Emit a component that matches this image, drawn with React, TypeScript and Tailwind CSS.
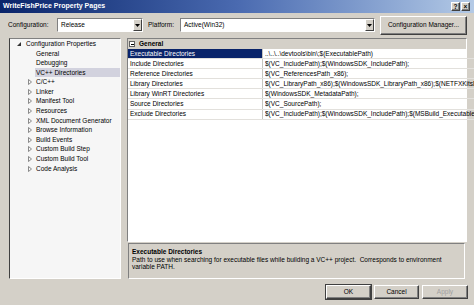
import type { ReactNode } from 'react'

const treeItems = [
  { label: 'General', kind: 'leaf' },
  { label: 'Debugging', kind: 'leaf' },
  { label: 'VC++ Directories', kind: 'leaf', selected: true },
  { label: 'C/C++', kind: 'branch' },
  { label: 'Linker', kind: 'branch' },
  { label: 'Manifest Tool', kind: 'branch' },
  { label: 'Resources', kind: 'branch' },
  { label: 'XML Document Generator', kind: 'branch' },
  { label: 'Browse Information', kind: 'branch' },
  { label: 'Build Events', kind: 'branch' },
  { label: 'Custom Build Step', kind: 'branch' },
  { label: 'Custom Build Tool', kind: 'branch' },
  { label: 'Code Analysis', kind: 'branch' },
]

const rows = [
  ['Executable Directories', '..\\..\\..\\devtools\\bin\\;$(ExecutablePath)'],
  ['Include Directories', '$(VC_IncludePath);$(WindowsSDK_IncludePath);'],
  ['Reference Directories', '$(VC_ReferencesPath_x86);'],
  ['Library Directories', '$(VC_LibraryPath_x86);$(WindowsSDK_LibraryPath_x86);$(NETFXKitsDir)Lib\\um\\x86'],
  ['Library WinRT Directories', '$(WindowsSDK_MetadataPath);'],
  ['Source Directories', '$(VC_SourcePath);'],
  ['Exclude Directories', '$(VC_IncludePath);$(WindowsSDK_IncludePath);$(MSBuild_ExecutablePath);$(VC_LibraryPath_x86)'],
]

function DownArrow() {
  return (
    <svg width="5" height="3" viewBox="0 0 5 3">
      <path d="M0 0h5L2.5 3z" fill="#000" />
    </svg>
  )
}

function DropButton({ className = '' }: { className?: string }) {
  return (
    <div
      className={`flex items-center justify-center bg-[#d4d0c8] border border-t-white border-l-white border-r-[#404040] border-b-[#404040] ${className}`}
    >
      <DownArrow />
    </div>
  )
}

function Combo({ value, width }: { value: string; width: string }) {
  return (
    <div
      className={`flex h-[14px] ${width} items-center border border-t-[#808080] border-l-[#808080] border-b-white border-r-white bg-white`}
    >
      <span className="flex-1 pl-[3px] leading-none">{value}</span>
      <DropButton className="h-[12px] w-[9px]" />
    </div>
  )
}

function Button({ children, className = '', disabled = false }: { children: ReactNode; className?: string; disabled?: boolean }) {
  return (
    <div
      className={`flex items-center justify-center bg-[#d4d0c8] border border-t-white border-l-white border-r-[#404040] border-b-[#404040] shadow-[inset_-1px_-1px_0_#808080] ${disabled ? 'text-[#a0a0a0]' : 'text-black'} ${className}`}
    >
      {children}
    </div>
  )
}

export default function App() {
  return (
    <div className="flex h-[305px] w-[474px] flex-col overflow-hidden bg-[#d4d0c8] font-['Liberation_Sans',Arial,sans-serif] text-[6.5px] text-black">
      {/* title bar */}
      <div className="flex h-[13px] items-center justify-between bg-gradient-to-r from-[#0a246a] via-[#4a6ab0] to-[#b4cae6] pl-[3px] pr-[4px]">
        <span className="text-[7px] font-bold text-white">WriteFishPrice Property Pages</span>
        <div className="flex gap-[1px]">
          <Button className="h-[9px] w-[9px] font-bold text-[6.5px]">?</Button>
          <Button className="h-[9px] w-[9px] font-bold text-[6.5px]">×</Button>
        </div>
      </div>

      {/* configuration row */}
      <div className="mt-[2px] flex h-[20px] items-center pl-[8px] pr-[7px]">
        <span className="w-[49px]">Configuration:</span>
        <Combo value="Release" width="w-[86px]" />
        <span className="ml-[5px] w-[32px]">Platform:</span>
        <Combo value="Active(Win32)" width="w-[195px]" />
        <Button className="ml-[5px] h-[19px] flex-1">Configuration Manager...</Button>
      </div>

      {/* main area */}
      <div className="mt-[3px] flex h-[241px] pl-[9px]">
        <div className="w-[112px] border border-t-[#808080] border-l-[#404040] border-b-white border-r-white bg-[#f6f6f6]">
          <div className="flex h-[9.6px] items-center">
            <svg width="4" height="4" viewBox="0 0 4 4" className="ml-[7px] mr-[5px]">
              <path d="M4 0v4H0z" fill="#333" />
            </svg>
            <span>Configuration Properties</span>
          </div>
          {treeItems.map((item) => (
            <div key={item.label} className="flex h-[9.6px] items-center">
              <div className="flex w-[25px] justify-end pr-[3px]">
                {item.kind === 'branch' ? (
                  <svg width="4" height="6" viewBox="0 0 4 6">
                    <path d="M0.5 0.5v5l3-2.5z" fill="none" stroke="#707070" strokeWidth="0.8" />
                  </svg>
                ) : null}
              </div>
              <span className={`flex h-full flex-1 items-center pl-[1px] ${item.selected ? 'bg-[#d2d2de]' : ''}`}>
                {item.label}
              </span>
            </div>
          ))}
        </div>

        <div className="ml-[6px] flex w-[340px] flex-col">
          {/* property grid */}
          <div className="flex h-[204px] flex-col border border-t-[#808080] border-l-[#808080] border-b-white border-r-white bg-white">
            <div className="flex h-[10px] items-center bg-[#d4d0c8]">
              <div className="ml-[1px] flex h-[6px] w-[6px] items-center justify-center border border-[#606060] bg-white">
                <div className="h-[1px] w-[3px] bg-black" />
              </div>
              <span className="ml-[4px] font-bold">General</span>
            </div>
            <div className="flex flex-1">
              <div className="w-[9px] bg-[#d4d0c8]" />
              <div className="flex flex-1 flex-col">
                {rows.map(([name, value], i) => (
                  <div key={name} className="flex h-[10.1px] border-b border-[#e2e0dc]">
                    <div
                      className={`flex w-[135px] items-center border-r border-[#c8c6c0] pl-[2px] ${i === 0 ? 'bg-[#0a246a] text-white' : ''}`}
                    >
                      {name}
                    </div>
                    <div className="flex flex-1 items-center overflow-hidden whitespace-nowrap pl-[2px]">
                      <span className="flex-1 overflow-hidden">{value}</span>
                      {i === 0 ? <DropButton className="mr-[2px] h-[8px] w-[8px]" /> : null}
                    </div>
                  </div>
                ))}
              </div>
            </div>
          </div>

          {/* description */}
          <div className="mt-[1px] ml-[1px] mr-[2px] flex h-[36px] flex-col border border-t-[#808080] border-l-[#808080] border-b-white border-r-white px-[3px] pt-[4px] leading-[7.6px]">
            <span className="font-bold">Executable Directories</span>
            <span>
              Path to use when searching for executable files while building a VC++ project.&nbsp; Corresponds to environment
              <br />
              variable PATH.
            </span>
          </div>
        </div>
      </div>

      {/* buttons */}
      <div className="mt-[6px] flex justify-end gap-[3px] pr-[6px]">
        <Button className="h-[14px] w-[45px] outline outline-1 outline-[#404040]">OK</Button>
        <Button className="h-[14px] w-[45px]">Cancel</Button>
        <Button className="h-[14px] w-[46px]" disabled>
          Apply
        </Button>
      </div>
    </div>
  )
}
